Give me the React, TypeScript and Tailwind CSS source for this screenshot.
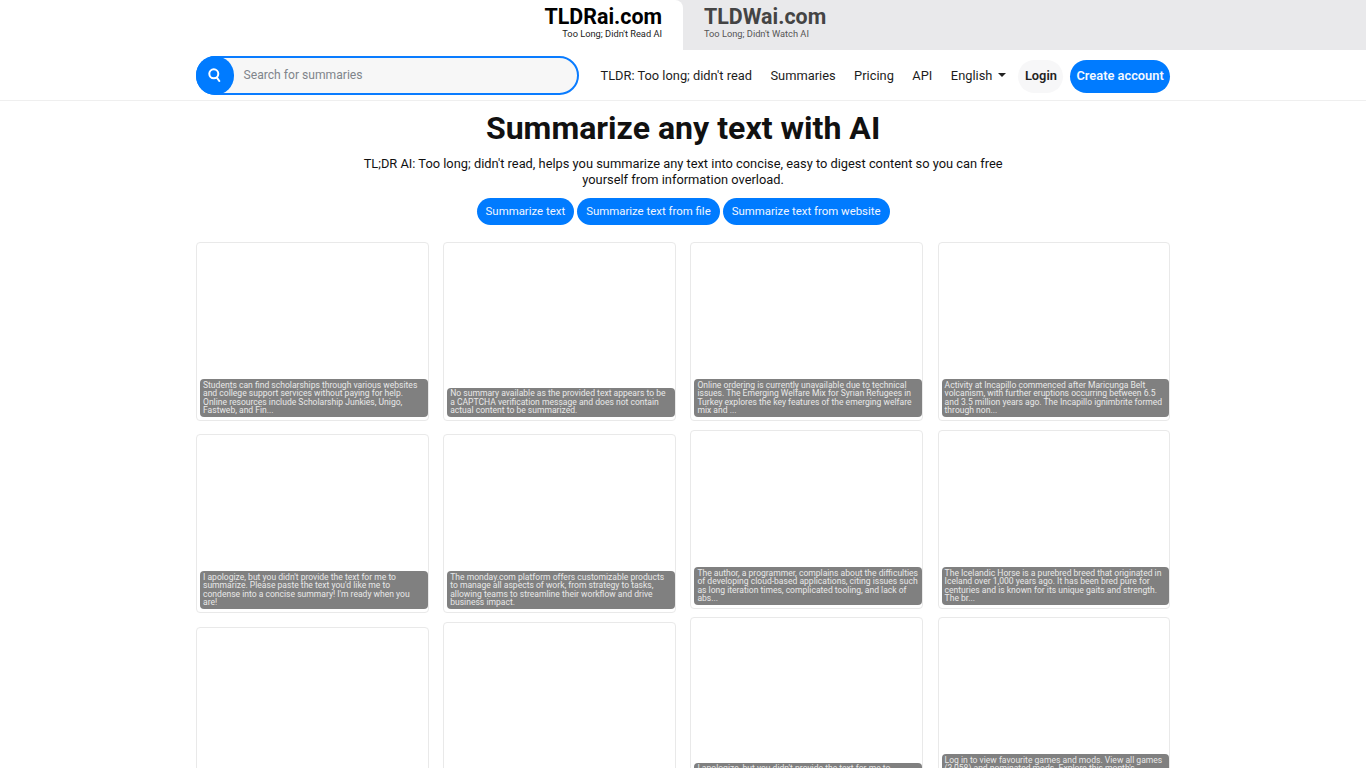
const F = "font-['Roboto',sans-serif]";

function Card({ text, mb }: { text: string; mb: string }) {
  return (
    <div className={`relative h-[179px] ${mb} shrink-0 rounded-[4px] border border-[#e9e9e9] bg-white`}>
      {text && (
        <div className="absolute left-[3px] right-0 bottom-[3px] rounded-[4px] bg-[#808080] px-[3px] pt-[1.5px] pb-[2px] text-[8.56px] leading-[8.56px] text-[#e8e8e8]">
          {text}
        </div>
      )}
    </div>
  );
}

const col1 = [
  { t: "Students can find scholarships through various websites and college support services without paying for help. Online resources include Scholarship Junkies, Unigo, Fastweb, and Fin...", mb: "mb-[13px]" },
  { t: "I apologize, but you didn't provide the text for me to summarize. Please paste the text you'd like me to condense into a concise summary! I'm ready when you are!", mb: "mb-[14px]" },
  { t: "", mb: "mb-[14px]" },
];
const col2 = [
  { t: "No summary available as the provided text appears to be a CAPTCHA verification message and does not contain actual content to be summarized.", mb: "mb-[13px]" },
  { t: "The monday.com platform offers customizable products to manage all aspects of work, from strategy to tasks, allowing teams to streamline their workflow and drive business impact.", mb: "mb-[9px]" },
  { t: "Biji, a real estate platform, is expanding its business operations across new markets and adding services for customers and partners while growing its reach further.", mb: "mb-[14px]" },
];
const col3 = [
  { t: "Online ordering is currently unavailable due to technical issues. The Emerging Welfare Mix for Syrian Refugees in Turkey explores the key features of the emerging welfare mix and ...", mb: "mb-[9px]" },
  { t: "The author, a programmer, complains about the difficulties of developing cloud-based applications, citing issues such as long iteration times, complicated tooling, and lack of abs...", mb: "mb-[8px]" },
  { t: "I apologize, but you didn't provide the text for me to summarize. Please paste the text you'd like me to condense into a concise summary!", mb: "mb-[14px]" },
];
const col4 = [
  { t: "Activity at Incapillo commenced after Maricunga Belt volcanism, with further eruptions occurring between 6.5 and 3.5 million years ago. The Incapillo ignimbrite formed through non...", mb: "mb-[9px]" },
  { t: "The Icelandic Horse is a purebred breed that originated in Iceland over 1,000 years ago. It has been bred pure for centuries and is known for its unique gaits and strength. The br...", mb: "mb-[8px]" },
  { t: "Log in to view favourite games and mods. View all games (3,058) and nominated mods. Explore this month's featured mods and more from the community here on the site.", mb: "mb-[14px]" },
];

export default function App() {
  return (
    <div className={`${F} h-[768px] overflow-hidden bg-white text-[#111]`}>
      <div className="flex h-[50px] bg-[#e9e9eb]">
        <div className="flex w-[683px] flex-col items-end rounded-tr-[8px] bg-white pr-[21px] pt-[4px]">
          <div className="text-[21.4px] font-bold leading-[25px] text-black">TLDRai.com</div>
          <div className="text-[9.28px] leading-[10px] text-[#222]">Too Long; Didn't Read AI</div>
        </div>
        <div className="flex flex-1 flex-col pl-[21px] pt-[4px]">
          <div className="text-[21.4px] font-bold leading-[25px] text-[#444]">TLDWai.com</div>
          <div className="text-[9.28px] leading-[10px] text-[#555]">Too Long; Didn't Watch AI</div>
        </div>
      </div>

      <div className="flex h-[51px] items-center whitespace-nowrap border-b border-[#efefef] pl-[195.5px]">
        <div className="flex h-[39px] w-[383px] shrink-0 items-center rounded-full border-2 border-[#0a7cff] bg-[#f7f7f7]">
          <div className="ml-[-2px] flex h-[39px] w-[38.5px] items-center justify-center rounded-full bg-[#007bff]">
            <svg width="13" height="14" viewBox="0 0 13 14" fill="none" stroke="white" strokeWidth="2" strokeLinecap="round">
              <circle cx="5.8" cy="5.8" r="4.5" />
              <path d="M8.9 9.6 11.3 13" />
            </svg>
          </div>
          <span className="ml-[9.5px] text-[12.13px] text-[#80858b]">Search for summaries</span>
        </div>
        <nav className="ml-[22px] flex items-center gap-[18.5px] pt-[1px] text-[12.85px] text-[#1c1c1c]">
          <span>TLDR: Too long; didn't read</span>
          <span>Summaries</span>
          <span>Pricing</span>
          <span>API</span>
          <span className="flex items-center gap-[6px]">
            English
            <span className="h-0 w-0 border-x-[4px] border-t-[4px] border-x-transparent border-t-[#222]" />
          </span>
        </nav>
        <div className="ml-[12px] mt-[2px] flex h-[33px] items-center rounded-full bg-[#f7f7f8] px-[6.5px] text-[12.85px] font-semibold text-[#222]">Login</div>
        <div className="ml-[6.5px] mt-[2px] flex h-[33px] items-center rounded-full bg-[#007bff] px-[6.5px] text-[12.85px] font-semibold text-[#f3f8ff]">Create account</div>
      </div>

      <main className="ml-[196px] w-[974.2px]">
        <h1 className="mt-[7px] text-center text-[32.1px] font-bold leading-[40px] text-[#111]">Summarize any text with AI</h1>
        <p className="mx-auto mt-[8px] w-[660px] text-center text-[12.85px] leading-[16px] text-[#111]">
          TL;DR AI: Too long; didn't read, helps you summarize any text into concise, easy to digest content so you can free yourself from information overload.
        </p>
        <div className="mt-[10px] flex justify-center gap-[3px] text-[11.42px] text-[#f0f6ff]">
          <span className="flex h-[27px] items-center rounded-full bg-[#007bff] px-[9px]">Summarize text</span>
          <span className="flex h-[27px] items-center rounded-full bg-[#007bff] px-[9px]">Summarize text from file</span>
          <span className="flex h-[27px] items-center rounded-full bg-[#007bff] px-[9px]">Summarize text from website</span>
        </div>
        <div className="mt-[17px] grid grid-cols-4 gap-x-[14.6px]">
          {[col1, col2, col3, col4].map((c, i) => (
            <div key={i} className="flex flex-col">
              {c.map((x, j) => (
                <Card key={j} text={x.t} mb={x.mb} />
              ))}
            </div>
          ))}
        </div>
      </main>
    </div>
  );
}
